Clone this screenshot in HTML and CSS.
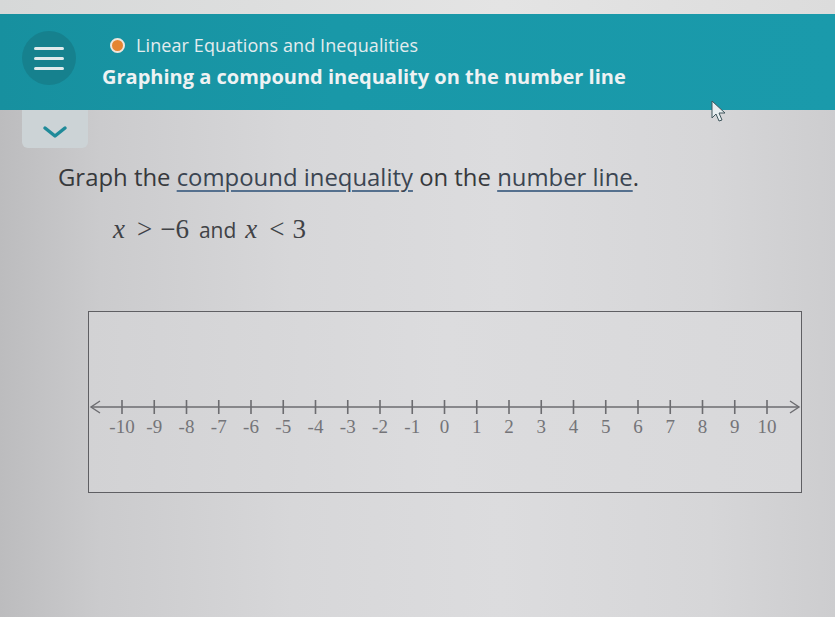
FILE: index.html
```html
<!DOCTYPE html>
<html lang="en">
<head>
<meta charset="utf-8">
<title>Graphing a compound inequality on the number line</title>
<link rel="stylesheet" href="styles.css">
</head>
<body>
<div class="page">
  <div class="topstrip"></div>
  <header class="topbar">
    <button class="menu-btn" aria-label="Menu">
      <span></span><span></span><span></span>
    </button>
    <div class="titles">
      <div class="topic"><span class="topic-dot"></span>Linear Equations and Inequalities</div>
      <h1 class="lesson">Graphing a compound inequality on the number line</h1>
    </div>
    <svg class="cursor" width="16" height="24" viewBox="0 0 16 24">
      <path d="M1 1 L1 18 L5 14 L8 21 L11 20 L8 13 L14 13 Z" fill="#e8eef0" stroke="#40565c" stroke-width="1"/>
    </svg>
  </header>

  <div class="tab">
    <svg width="28" height="16" viewBox="0 0 28 16"><path d="M4 4 L14 12 L24 4" fill="none" stroke="#1f8a99" stroke-width="3.5" stroke-linecap="round" stroke-linejoin="round"/></svg>
  </div>

  <main class="content">
    <p class="prompt">Graph the <a class="term">compound inequality</a> on the <a class="term">number line</a>.</p>
    <p class="math"><i class="var">x</i><span class="op">&gt;</span><span class="num">−6</span><span class="word">and</span><i class="var">x</i><span class="op">&lt;</span><span class="num">3</span></p>

    <div class="graph-box">
      <svg class="numline" width="712" height="180" viewBox="0 0 712 180">
        <g stroke="#6c6c70" stroke-width="1.4" fill="none">
          <line x1="2" y1="95" x2="710" y2="95"/>
          <path d="M11 89 L2 95 L11 101"/>
          <path d="M701 89 L710 95 L701 101"/>
        </g>
        <g id="ticks" stroke="#6c6c70" stroke-width="1.6"></g>
        <g id="labels" font-family="'Liberation Serif', 'DejaVu Serif', serif" font-size="19" fill="#747478" text-anchor="middle">
          <text x="33" y="121">-10</text>
          <text x="65.25" y="121">-9</text>
          <text x="97.5" y="121">-8</text>
          <text x="129.75" y="121">-7</text>
          <text x="162" y="121">-6</text>
          <text x="194.25" y="121">-5</text>
          <text x="226.5" y="121">-4</text>
          <text x="258.75" y="121">-3</text>
          <text x="291" y="121">-2</text>
          <text x="323.25" y="121">-1</text>
          <text x="355.5" y="121">0</text>
          <text x="387.75" y="121">1</text>
          <text x="420" y="121">2</text>
          <text x="452.25" y="121">3</text>
          <text x="484.5" y="121">4</text>
          <text x="516.75" y="121">5</text>
          <text x="549" y="121">6</text>
          <text x="581.25" y="121">7</text>
          <text x="613.5" y="121">8</text>
          <text x="645.75" y="121">9</text>
          <text x="678" y="121">10</text>
        </g>
      </svg>
    </div>
  </main>
</div>
<script>
  // tick marks at every integer from -10 to 10
  (function () {
    var g = document.getElementById('ticks');
    var ns = 'http://www.w3.org/2000/svg';
    for (var i = 0; i <= 20; i++) {
      var x = 33 + i * 32.25;
      var l = document.createElementNS(ns, 'line');
      l.setAttribute('x1', x); l.setAttribute('x2', x);
      l.setAttribute('y1', 88); l.setAttribute('y2', 102);
      g.appendChild(l);
    }
  })();
</script>
</body>
</html>
```

FILE: styles.css
```css
* { box-sizing: border-box; }

html, body {
  margin: 0;
  padding: 0;
}

body {
  width: 835px;
  height: 617px;
  overflow: hidden;
  font-family: "Open Sans", "Liberation Sans", sans-serif;
  background: linear-gradient(90deg, #bcbcbe 0%, #cbcbcd 12%, #d7d7d9 35%, #dcdcde 60%, #d6d6d8 85%, #cdcdcf 100%);
}

.page {
  position: relative;
  height: 617px;
}

.topstrip {
  height: 14px;
  background: linear-gradient(90deg, #d6d8d8, #e4e4e4 60%, #dcdcdc);
}

.topbar {
  position: relative;
  height: 96px;
  display: flex;
  align-items: flex-start;
  padding-left: 22px;
  background: linear-gradient(90deg, #17909f 0%, #1998a8 40%, #1a9aab 100%);
}

.menu-btn {
  width: 54px;
  height: 54px;
  margin-top: 17px;
  border: 0;
  border-radius: 50%;
  background: #16818e;
  display: flex;
  flex-direction: column;
  align-items: center;
  justify-content: center;
  gap: 7px;
  padding: 0;
}

.menu-btn span {
  display: block;
  width: 30px;
  height: 3px;
  border-radius: 2px;
  background: #dfeaec;
}

.titles {
  margin-left: 26px;
  padding-top: 20px;
  color: #eef3f4;
}

.topic {
  display: flex;
  align-items: center;
  font-family: "Open Sans", "Lato", sans-serif;
  font-size: 18px;
  line-height: 22px;
  padding-left: 8px;
  color: #e4ecee;
  letter-spacing: 0.1px;
}

.topic-dot {
  width: 15px;
  height: 15px;
  border-radius: 50%;
  background: #e58532;
  border: 2px solid #f0e6dc;
  margin-right: 11px;
}

.lesson {
  margin: 8px 0 0 0;
  font-family: "Open Sans", "Lato", sans-serif;
  font-weight: 700;
  font-size: 20px;
  line-height: 26px;
  color: #eef2f3;
  letter-spacing: 0;
}

.cursor {
  position: absolute;
  left: 711px;
  top: 86px;
}

.tab {
  margin-left: 22px;
  width: 66px;
  height: 38px;
  background: #ccd3d6;
  border-radius: 0 0 6px 6px;
  display: flex;
  align-items: center;
  justify-content: center;
  padding-top: 6px;
}

.content {
  padding-left: 58px;
}

.prompt {
  margin: 14px 0 0 0;
  font-size: 23.9px;
  line-height: 30px;
  color: #37393c;
}

.term {
  color: #3b4552;
  text-decoration: underline;
  text-decoration-color: #55708e;
  text-decoration-thickness: 1.5px;
  text-underline-offset: 4px;
}

.math {
  margin: 22px 0 0 55px;
  display: flex;
  align-items: baseline;
  line-height: 30px;
  color: #404246;
}

.math .var {
  font-family: "Liberation Serif", "DejaVu Serif", serif;
  font-style: italic;
  font-size: 27px;
}

.math .op {
  font-family: "Liberation Serif", "DejaVu Serif", serif;
  font-size: 27px;
  margin: 0 8px 0 12px;
}

.math .num {
  font-family: "Liberation Serif", "DejaVu Serif", serif;
  font-size: 27px;
}

.math .word {
  font-family: "Open Sans", sans-serif;
  font-size: 21px;
  margin: 0 9px 0 10px;
}

.graph-box {
  margin: 66px 0 0 30px;
  width: 714px;
  height: 182px;
  border: 1.5px solid #5f5f63;
  background: linear-gradient(90deg, #d2d2d4, #dcdcde 50%, #d8d8da);
}

.numline {
  display: block;
}
```
